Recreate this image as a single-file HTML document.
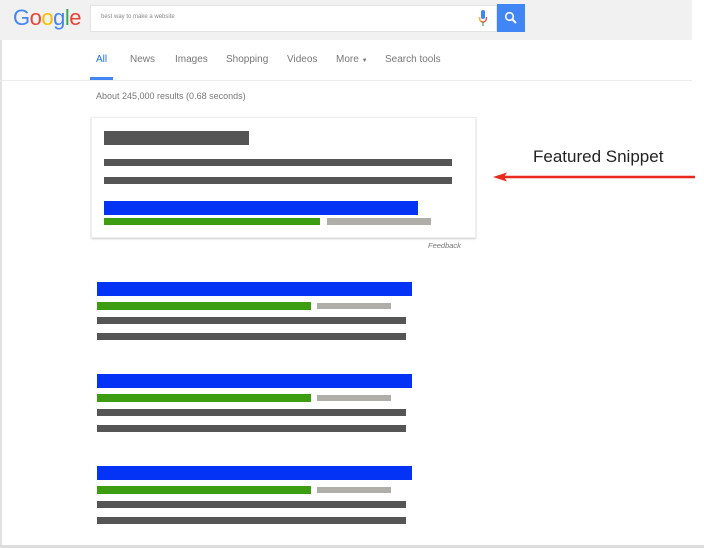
<!DOCTYPE html>
<html><head><meta charset="utf-8"><style>
*{margin:0;padding:0;box-sizing:border-box}
body{width:704px;height:548px;background:#fff;position:relative;overflow:hidden;font-family:"Liberation Sans",Arial,sans-serif}
.a{position:absolute}
.d{background:#555}.b{background:#0533f5}.g{background:#3c9d11}.s{background:#b0aea8}
.nav{position:absolute;top:54px;font-size:10px;color:#777}
</style></head><body>
<div class="a" style="left:0;top:0;width:2px;height:548px;background:#e2e2e2"></div>
<div class="a" style="left:0;top:545px;width:704px;height:3px;background:#ddd"></div>
<div class="a" style="left:0;top:0;width:692px;height:40px;background:#f1f1f1"></div>
<div class="a" style="left:13px;top:5px;font-size:22px;letter-spacing:-0.5px;line-height:26px"><span style="color:#4285f4">G</span><span style="color:#ea4335">o</span><span style="color:#fbbc05">o</span><span style="color:#4285f4">g</span><span style="color:#34a853">l</span><span style="color:#ea4335">e</span></div>
<div class="a" style="left:90px;top:5px;width:407px;height:27px;background:#fff;border:1px solid #e4e4e4"></div>
<div class="a" style="left:101px;top:14px;font-size:6px;color:#888">best way to make a website</div>
<svg class="a" style="left:478px;top:10px" width="10" height="17" viewBox="0 0 10 17"><rect x="3" y="0" width="4" height="9" rx="2" fill="#4285f4"/><path d="M1.5 7 Q1.5 12 5 12 Q8.5 12 8.5 7" fill="none" stroke="#ea4335" stroke-width="1.3"/><path d="M1.5 7 Q1.5 10 3 11" fill="none" stroke="#fbbc05" stroke-width="1.3"/><rect x="4.4" y="12" width="1.2" height="4" fill="#34a853"/></svg>
<div class="a" style="left:497px;top:4px;width:28px;height:28px;background:#4285f4"></div>
<svg class="a" style="left:504px;top:11px" width="14" height="14" viewBox="0 0 14 14"><circle cx="5.5" cy="5.5" r="3.8" fill="none" stroke="#fff" stroke-width="1.6"/><path d="M8.3 8.3 L12 12" stroke="#fff" stroke-width="2"/></svg>
<div class="a" style="left:0;top:80px;width:692px;height:1px;background:#ececec"></div>
<div class="nav" style="left:96px;color:#1a73e8">All</div>
<div class="nav" style="left:130px">News</div>
<div class="nav" style="left:175px">Images</div>
<div class="nav" style="left:226px">Shopping</div>
<div class="nav" style="left:287px">Videos</div>
<div class="nav" style="left:336px">More <span style="font-size:6px">▼</span></div>
<div class="nav" style="left:385px">Search tools</div>
<div class="a" style="left:90px;top:77px;width:23px;height:3px;background:#4285f4"></div>
<div class="a" style="left:96px;top:91px;font-size:9px;color:#777">About 245,000 results (0.68 seconds)</div>
<div class="a" style="left:91px;top:117px;width:385px;height:121px;background:#fff;box-shadow:0 1px 2px rgba(0,0,0,.2);border:1px solid #eee"></div>
<div class="a d" style="left:104px;top:131px;width:145px;height:14px"></div>
<div class="a d" style="left:104px;top:159px;width:348px;height:7px"></div>
<div class="a d" style="left:104px;top:177px;width:348px;height:7px"></div>
<div class="a b" style="left:104px;top:201px;width:314px;height:14px"></div>
<div class="a g" style="left:104px;top:218px;width:216px;height:7px"></div>
<div class="a s" style="left:327px;top:218px;width:104px;height:7px"></div>
<div class="a" style="left:428px;top:241px;font-size:7.5px;font-style:italic;color:#777">Feedback</div>
<div class="a" style="left:533px;top:147px;font-size:17px;color:#222">Featured Snippet</div>
<svg class="a" style="left:490px;top:170px" width="210" height="14"><path d="M205 7 L14 7" stroke="#e8291c" stroke-width="2.5"/><path d="M3 7 L17 2.5 L14 7 L17 11.5 Z" fill="#e8291c"/></svg>

<div class="a b" style="left:97px;top:282px;width:315px;height:14px"></div>
<div class="a g" style="left:97px;top:302px;width:214px;height:8px"></div>
<div class="a s" style="left:317px;top:303px;width:74px;height:6px"></div>
<div class="a d" style="left:97px;top:317px;width:309px;height:7px"></div>
<div class="a d" style="left:97px;top:333px;width:309px;height:7px"></div>

<div class="a b" style="left:97px;top:374px;width:315px;height:14px"></div>
<div class="a g" style="left:97px;top:394px;width:214px;height:8px"></div>
<div class="a s" style="left:317px;top:395px;width:74px;height:6px"></div>
<div class="a d" style="left:97px;top:409px;width:309px;height:7px"></div>
<div class="a d" style="left:97px;top:425px;width:309px;height:7px"></div>

<div class="a b" style="left:97px;top:466px;width:315px;height:14px"></div>
<div class="a g" style="left:97px;top:486px;width:214px;height:8px"></div>
<div class="a s" style="left:317px;top:487px;width:74px;height:6px"></div>
<div class="a d" style="left:97px;top:501px;width:309px;height:7px"></div>
<div class="a d" style="left:97px;top:517px;width:309px;height:7px"></div>
</body></html>
